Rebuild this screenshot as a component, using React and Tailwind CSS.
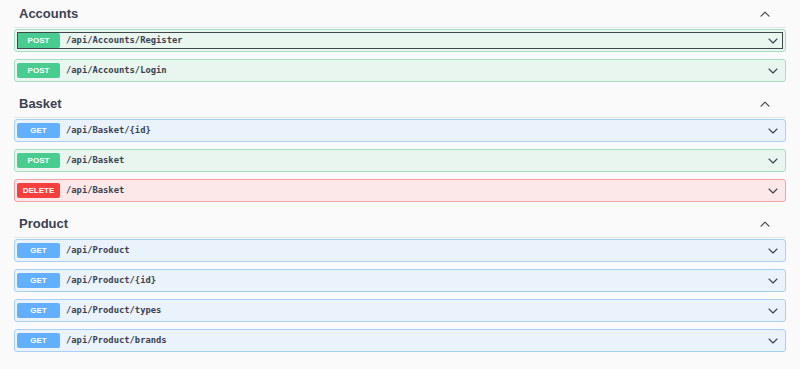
const methodStyles = {
  POST: { row: 'bg-[#e8f6ef] border-[#a3dec3]', badge: 'bg-[#49cc90]' },
  GET: { row: 'bg-[#eaf3fc] border-[#a8cff6]', badge: 'bg-[#61affe]' },
  DELETE: { row: 'bg-[#fce8e8] border-[#f0a2a4]', badge: 'bg-[#f93e3e]' },
};

const sections = [
  {
    name: 'Accounts',
    ops: [
      { method: 'POST', path: '/api/Accounts/Register', focused: true },
      { method: 'POST', path: '/api/Accounts/Login' },
    ],
  },
  {
    name: 'Basket',
    ops: [
      { method: 'GET', path: '/api/Basket/{id}' },
      { method: 'POST', path: '/api/Basket' },
      { method: 'DELETE', path: '/api/Basket' },
    ],
  },
  {
    name: 'Product',
    ops: [
      { method: 'GET', path: '/api/Product' },
      { method: 'GET', path: '/api/Product/{id}' },
      { method: 'GET', path: '/api/Product/types' },
      { method: 'GET', path: '/api/Product/brands' },
    ],
  },
];

const Chevron = ({ up = false }) => (
  <svg width="10" height="6" viewBox="0 0 10 6" fill="none">
    <path
      d={up ? 'M1 5.2 L5 1.2 L9 5.2' : 'M1 1 L5 5 L9 1'}
      stroke="#3b4151"
      strokeWidth="1.1"
      strokeLinecap="round"
      strokeLinejoin="round"
    />
  </svg>
);

const OperationRow = ({ method, path, focused }) => {
  const style = methodStyles[method];
  return (
    <div className={`h-[23px] mb-[7px] border rounded-[3px] ${style.row}`}>
      <div
        className={`h-full flex items-center pl-[2px] pr-[7px] rounded-[2px] ${
          focused ? 'outline-[1.5px] outline-solid outline-[#3d4a4a] -outline-offset-[3px]' : ''
        }`}
      >
        <span
          className={`w-[43px] h-[15px] flex items-center justify-center rounded-[2px] text-white text-[8px] font-bold ${style.badge}`}
          style={{ fontFamily: '"Liberation Sans", Arial, sans-serif' }}
        >
          {method}
        </span>
        <span
          className="ml-[6px] flex-1 text-[8.8px] font-bold text-[#3b4151]"
          style={{ fontFamily: '"DejaVu Sans Mono", monospace' }}
        >
          {path}
        </span>
        <Chevron />
      </div>
    </div>
  );
};

export default function App() {
  return (
    <div
      className="w-[800px] h-[369px] bg-[#fafafa] px-[14px] overflow-hidden"
      style={{ fontFamily: '"Liberation Sans", Arial, sans-serif' }}
    >
      {sections.map((section, i) => (
        <div key={section.name} className={i > 0 ? 'pt-[1px]' : ''}>
          <div className="h-[28px] flex items-center justify-between border-b border-[#e2e3e6] pl-[5px] pr-[16px] mb-[1px]">
            <h3 className="text-[13px] font-bold text-[#3b4151] leading-none">{section.name}</h3>
            <Chevron up />
          </div>
          {section.ops.map((op) => (
            <OperationRow key={op.method + op.path} {...op} />
          ))}
        </div>
      ))}
    </div>
  );
}
